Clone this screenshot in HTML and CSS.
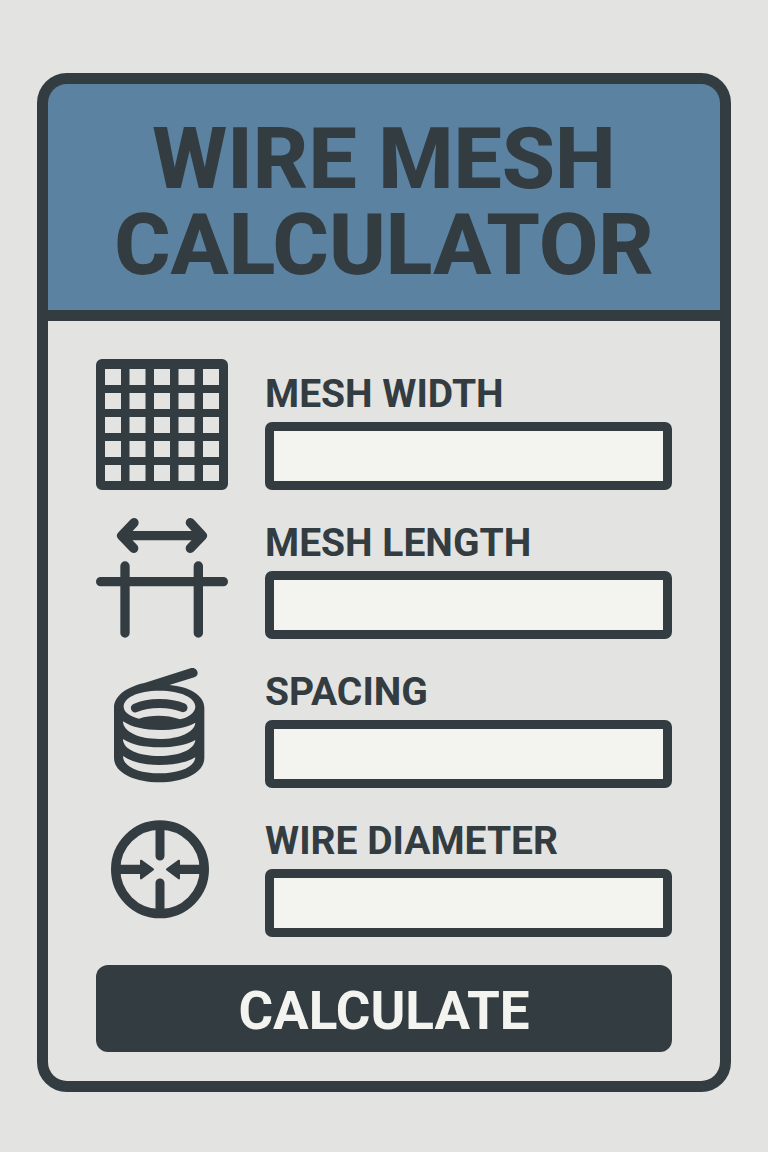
FILE: index.html
```html
<!DOCTYPE html>
<html lang="en">
<head>
  <meta charset="UTF-8" />
  <meta name="viewport" content="width=device-width, initial-scale=1.0"/>
  <title>Wire Mesh Calculator</title>
  <link rel="stylesheet" href="styles.css">
</head>
<body>

  <main class="calculator">
    <header class="calculator-header">
      <h1>WIRE MESH<br>CALCULATOR</h1>
    </header>

    <form class="calculator-form" id="meshForm">
      <!-- MESH WIDTH -->
      <div class="row">
        <svg class="icon" viewBox="0 0 132 131" aria-hidden="true">
          <path fill="currentColor" fill-rule="evenodd" d="M6 0h120a6 6 0 0 1 6 6v119a6 6 0 0 1-6 6H6a6 6 0 0 1-6-6V6a6 6 0 0 1 6-6z
            M9 10v16h16v-16z M33.5 10v16h16v-16z M58 10v16h16v-16z M82.5 10v16h16v-16z M107 10v16h16v-16z
            M9 34v16h16v-16z M33.5 34v16h16v-16z M58 34v16h16v-16z M82.5 34v16h16v-16z M107 34v16h16v-16z
            M9 58v16h16v-16z M33.5 58v16h16v-16z M58 58v16h16v-16z M82.5 58v16h16v-16z M107 58v16h16v-16z
            M9 82v16h16v-16z M33.5 82v16h16v-16z M58 82v16h16v-16z M82.5 82v16h16v-16z M107 82v16h16v-16z
            M9 106v16h16v-16z M33.5 106v16h16v-16z M58 106v16h16v-16z M82.5 106v16h16v-16z M107 106v16h16v-16z"/>
        </svg>
        <div class="field">
          <label for="mesh-width">MESH WIDTH</label>
          <input type="text" id="mesh-width" />
        </div>
      </div>

      <!-- MESH LENGTH -->
      <div class="row">
        <svg class="icon" viewBox="36 9 396 393" aria-hidden="true">
          <g fill="none" stroke="currentColor" stroke-width="28" stroke-linecap="round" stroke-linejoin="round">
            <path d="M120 92H348M150 53L113 92L149 130M319 53L355 92L319 130"/>
            <path d="M50 230H418M123 183V384M343 183V384"/>
          </g>
          <path fill="currentColor" d="M113 92L142 66V118ZM355 92L326 66V118Z"/>
        </svg>
        <div class="field">
          <label for="mesh-length">MESH LENGTH</label>
          <input type="text" id="mesh-length" />
        </div>
      </div>

      <!-- SPACING -->
      <div class="row">
        <svg class="icon" viewBox="36 6 396 393" aria-hidden="true">
          <path fill="currentColor" fill-rule="evenodd" d="M322 39C334 37 341 46 341 54Q341 63 331 67L256 90C318 95 361 122 361 158V309C361 352 303 382 226 382C149 382 90 352 90 309V158C90 125 123 97 181 84Z
            M119 155C119 128 161 107 226 107C291 107 334 128 334 155C334 172 314 187 288 193C246 179 202 180 165 191C137 184 119 170 119 155Z
            M117 199C143 217 183 225 226 225C269 225 309 218 334 203C332 231 287 252 226 252C165 252 117 231 117 199Z
            M117 252C143 270 183 277 226 277C269 277 309 270 334 255C332 283 287 303 226 303C165 303 117 284 117 252Z
            M117 303C143 322 183 330 226 330C269 330 309 323 334 307C332 336 287 355 226 355C165 355 117 336 117 303Z"/>
          <path fill="none" stroke="currentColor" stroke-width="27" stroke-linecap="round" d="M154 159C195 141 257 141 297 158"/>
        </svg>
        <div class="field">
          <label for="spacing">SPACING</label>
          <input type="text" id="spacing" />
        </div>
      </div>

      <!-- WIRE DIAMETER -->
      <div class="row">
        <svg class="icon" viewBox="36 3 396 393" aria-hidden="true">
          <g fill="none" stroke="currentColor" stroke-width="28">
            <circle cx="228" cy="193" r="133"/>
            <path stroke-width="27" stroke-linecap="round" d="M228 65V153M228 234V320"/>
            <path d="M100 193H175M356 193H280"/>
          </g>
          <path fill="currentColor" stroke="currentColor" stroke-width="6" stroke-linejoin="round" d="M171 167L207 193L171 220ZM285 167L249 193L285 220Z"/>
        </svg>
        <div class="field">
          <label for="wire-diameter">WIRE DIAMETER</label>
          <input type="text" id="wire-diameter" />
        </div>
      </div>

      <button type="submit" class="calculate-btn">CALCULATE</button>
    </form>
  </main>

  <script>
    document.getElementById('meshForm').addEventListener('submit', function (e) {
      e.preventDefault();
    });
  </script>

</body>
</html>
```
FILE: styles.css
```css
* {
  box-sizing: border-box;
}

body {
  margin: 0;
  padding: 73px 37px 60px;
  background: #e3e3e1;
  color: #333c40;
  font-family: Roboto, "Liberation Sans", sans-serif;
}

.calculator {
  border: 11px solid #333c40;
  border-radius: 30px;
  background: #333c40;
}

.calculator-header {
  padding: 32px 20px 22px;
  background: #5c82a1;
  border-bottom: 11px solid #333c40;
  border-radius: 19px 19px 0 0;
}

.calculator-header h1 {
  margin: 0;
  font-size: 86px;
  line-height: 86px;
  font-weight: 800;
  text-align: center;
}

.calculator-form {
  display: flex;
  flex-direction: column;
  gap: 18px;
  padding: 38px 48px 29px;
  background: #e3e3e1;
  border-radius: 0 0 19px 19px;
}

.row {
  display: flex;
  align-items: flex-end;
  gap: 37px;
}

.icon {
  flex: none;
  width: 132px;
  height: 131px;
}

.field {
  flex: 1;
  min-width: 0;
}

.field label {
  display: block;
  margin-bottom: 4px;
  font-size: 39px;
  line-height: 48px;
  font-weight: 700;
}

.field input {
  display: block;
  width: 100%;
  height: 68px;
  padding: 0 16px;
  border: 9px solid #333c40;
  border-radius: 7px;
  background: #f3f4ef;
  color: #333c40;
  font: inherit;
  font-size: 32px;
}

.calculate-btn {
  height: 87px;
  margin-top: 10px;
  padding: 4px 16px 0;
  border: none;
  border-radius: 12px;
  background: #333c40;
  color: #f3f4ef;
  font-family: inherit;
  font-size: 53px;
  font-weight: 700;
}
```
